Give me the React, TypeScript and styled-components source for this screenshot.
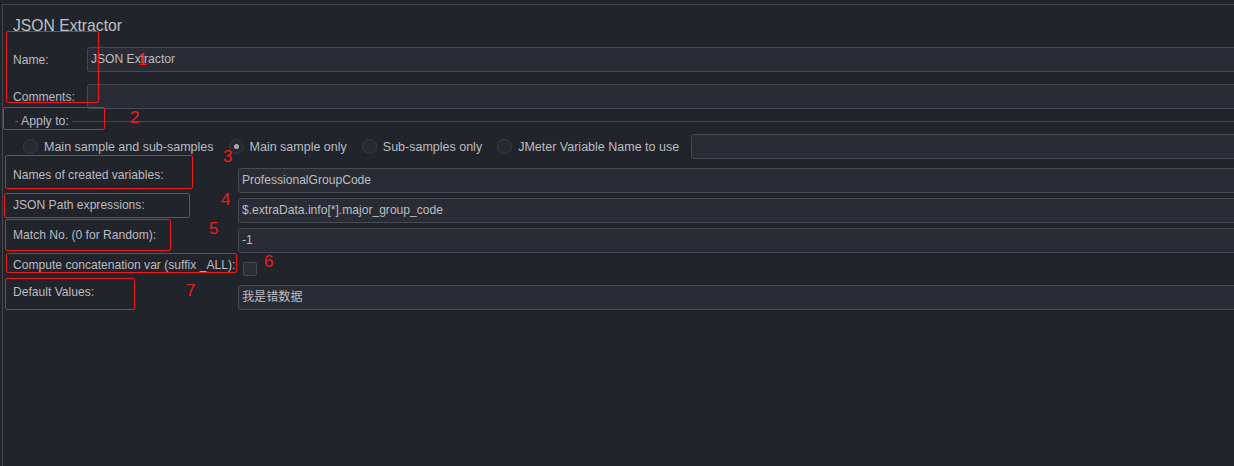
import * as React from 'react';
import styled, { createGlobalStyle } from 'styled-components';

const GlobalStyle = createGlobalStyle`
  html, body {
    margin: 0;
    padding: 0;
    background: #21242b;
    overflow: hidden;
  }
  body {
    font-family: "Liberation Sans", Arial, "Noto Sans CJK SC", sans-serif;
    color: #babcc0;
  }
  * { box-sizing: border-box; }
`;

const Page = styled.div`
  position: relative;
  height: 466px;
  padding: 4px 0 0 2px;
  overflow: hidden;
`;

const Panel = styled.div`
  height: 100%;
  width: calc(100% + 20px);
  border-top: 1px solid #44474e;
  border-left: 1px solid #44474e;
  padding: 11px 0 0 10px;
`;

const Title = styled.div`
  font-size: 15.7px;
  line-height: 20px;
  color: #bfc1c5;
`;

const NameGrid = styled.div`
  display: grid;
  grid-template-columns: 74px 1fr;
  grid-auto-rows: 25px;
  row-gap: 12px;
  margin-top: 11px;
  align-items: center;
`;

const Label = styled.div`
  font-size: 12.1px;
  line-height: 14px;
  white-space: nowrap;
`;

const TopLabel = styled(Label)`
  align-self: start;
`;

const Field = styled.div`
  height: 25px;
  background: #292c34;
  border: 1px solid #474a51;
  border-radius: 3px;
  font-size: 12.1px;
  line-height: 23px;
  padding-left: 3px;
  white-space: nowrap;
  color: #bcbec2;
  font-family: "Liberation Sans", Arial, "Noto Sans CJK SC", sans-serif;
`;

const GroupHead = styled.div`
  display: flex;
  align-items: center;
  height: 14px;
  margin-top: 5px;
  margin-left: 2px;
  font-size: 12.3px;
`;

const Dash = styled.span`
  width: 3px;
  height: 1px;
  background: #5a5d64;
  margin-right: 3px;
`;

const GroupLine = styled.span`
  flex: 1;
  height: 1px;
  background: #44474e;
  margin-left: 3px;
`;

const RadioRow = styled.div`
  display: flex;
  align-items: center;
  height: 25px;
  margin-top: 6px;
  padding-left: 10px;
  font-size: 12.5px;
`;

const RadioItem = styled.label`
  display: flex;
  align-items: center;
  gap: 6px;
  margin-right: 15px;
  white-space: nowrap;
`;

const RadioDot = styled.span<{ $on?: boolean }>`
  width: 15px;
  height: 15px;
  border-radius: 50%;
  border: 1px solid #3d4047;
  background: #262930;
  display: flex;
  align-items: center;
  justify-content: center;
  &::after {
    content: '';
    display: ${p => (p.$on ? 'block' : 'none')};
    width: 5px;
    height: 5px;
    border-radius: 50%;
    background: #a4a7ad;
  }
`;

const VarField = styled(Field)`
  flex: 1;
  margin-left: -3px;
`;

const MainGrid = styled.div`
  display: grid;
  grid-template-columns: 225px 1fr;
  grid-template-rows: 25px 25px 25px 22px 25px;
  row-gap: 5px;
  margin-top: 9px;
`;

const Check = styled.span`
  align-self: center;
  width: 14px;
  height: 14px;
  margin-left: 5px;
  border: 1px solid #464950;
  border-radius: 2px;
  background: #2a2d34;
`;

const Marks = styled.div`
  position: absolute;
  inset: 0;
  pointer-events: none;
`;

const Box = styled.div`
  position: absolute;
  border: 1px solid #f01c1c;
  border-radius: 2px;
`;

const Num = styled.div`
  position: absolute;
  font-size: 17px;
  line-height: 17px;
  color: #f01c1c;
  font-family: "Liberation Sans", Arial, sans-serif;
`;

const boxes = [
  { x: 6, y: 31, w: 93, h: 72 },
  { x: 3, y: 107, w: 102, h: 23 },
  { x: 5, y: 155, w: 188, h: 34 },
  { x: 4, y: 193, w: 186, h: 25 },
  { x: 5, y: 219, w: 166, h: 32 },
  { x: 6, y: 253, w: 231, h: 20 },
  { x: 5, y: 278, w: 130, h: 32 },
];

const nums = [
  { n: '1', x: 138, y: 51 },
  { n: '2', x: 130, y: 109 },
  { n: '3', x: 223, y: 148 },
  { n: '4', x: 221, y: 191 },
  { n: '5', x: 209, y: 220 },
  { n: '6', x: 264, y: 253 },
  { n: '7', x: 186, y: 282 },
];

const App = () => {
  return (
    <Page>
      <GlobalStyle />
      <Panel>
        <Title>JSON Extractor</Title>
        <NameGrid>
          <Label>Name:</Label>
          <Field>JSON Extractor</Field>
          <Label>Comments:</Label>
          <Field />
        </NameGrid>
        <GroupHead>
          <Dash />
          Apply to:
          <GroupLine />
        </GroupHead>
        <RadioRow>
          <RadioItem><RadioDot />Main sample and sub-samples</RadioItem>
          <RadioItem><RadioDot $on />Main sample only</RadioItem>
          <RadioItem><RadioDot />Sub-samples only</RadioItem>
          <RadioItem><RadioDot />JMeter Variable Name to use</RadioItem>
          <VarField />
        </RadioRow>
        <MainGrid>
          <TopLabel>Names of created variables:</TopLabel>
          <Field>ProfessionalGroupCode</Field>
          <TopLabel>JSON Path expressions:</TopLabel>
          <Field>$.extraData.info[*].major_group_code</Field>
          <TopLabel>Match No. (0 for Random):</TopLabel>
          <Field>-1</Field>
          <TopLabel>Compute concatenation var (suffix _ALL):</TopLabel>
          <Check />
          <TopLabel>Default Values:</TopLabel>
          <Field>我是错数据</Field>
        </MainGrid>
      </Panel>
      <Marks>
        {boxes.map((b, i) => (
          <Box key={i} style={{ left: b.x, top: b.y, width: b.w, height: b.h }} />
        ))}
        {nums.map(d => (
          <Num key={d.n} style={{ left: d.x, top: d.y }}>{d.n}</Num>
        ))}
      </Marks>
    </Page>
  );
};

export default App;
